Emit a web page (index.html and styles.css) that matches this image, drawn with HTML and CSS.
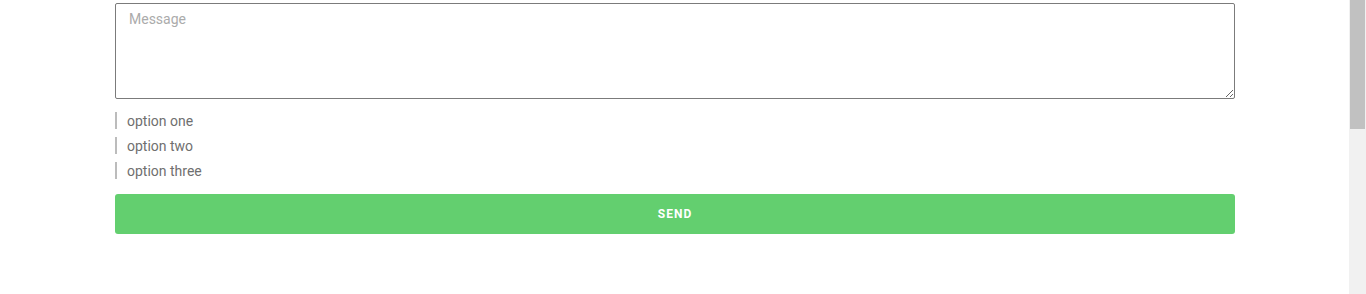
FILE: index.html
```html
<!DOCTYPE html>
<html>
<head>
<meta charset="utf-8">
<link rel="stylesheet" href="styles.css">
</head>
<body>
<div class="page">
  <main class="main">
    <form class="form">
      <textarea class="message" placeholder="Message"></textarea>
      <div class="options">
        <label class="option">option one</label>
        <label class="option">option two</label>
        <label class="option">option three</label>
      </div>
      <button type="button" class="send">SEND</button>
    </form>
  </main>
  <div class="scrollbar"><div class="thumb"></div></div>
</div>
</body>
</html>
```
FILE: styles.css
```css
html, body {
  margin: 0;
  padding: 0;
  height: 294px;
  overflow: hidden;
  background: #fff;
  font-family: Roboto, "Liberation Sans", sans-serif;
}
.page {
  display: flex;
  height: 294px;
}
.main {
  flex: 1;
  padding: 3px 0 0 115px;
}
.form {
  width: 1120px;
  display: flex;
  flex-direction: column;
}
.message {
  box-sizing: border-box;
  width: 1120px;
  height: 96px;
  border: 1px solid #7b7b7b;
  border-radius: 2px;
  padding: 7px 13px;
  font-family: Roboto, "Liberation Sans", sans-serif;
  font-size: 14px;
  color: #555;
  resize: vertical;
  margin: 0;
  outline: none;
}
.message::placeholder {
  color: #ababab;
}
.options {
  margin-top: 9px;
  display: flex;
  flex-direction: column;
}
.option {
  height: 25px;
  display: flex;
  align-items: center;
  font-size: 14px;
  color: #6f6f6f;
}
.option::before {
  content: "";
  width: 2px;
  height: 17px;
  background: #bcbcbc;
  margin-right: 10px;
}
.send {
  margin-top: 11px;
  height: 40px;
  border: none;
  border-radius: 3px;
  background: #63cf6f;
  color: #fff;
  font-family: Roboto, "Liberation Sans", sans-serif;
  font-weight: 700;
  font-size: 12px;
  letter-spacing: 1px;
  padding: 0;
}
.scrollbar {
  width: 17px;
  background: #f1f1f1;
  display: flex;
  justify-content: center;
}
.thumb {
  width: 15px;
  height: 129px;
  background: #c1c1c1;
}
```
